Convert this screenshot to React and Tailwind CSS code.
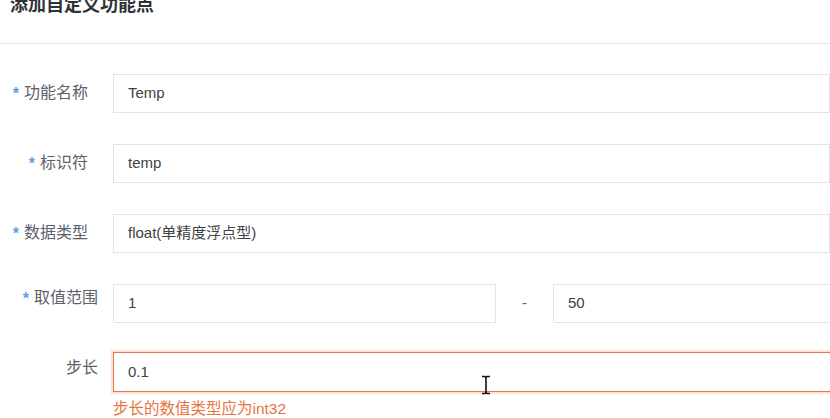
import React from "react";

const font = { fontFamily: '"Liberation Sans", "Noto Sans CJK SC", sans-serif' };

const Label = ({ required, children, className = "pr-[25px]" }) => (
  <div className={`w-[113px] shrink-0 flex justify-end items-center h-[38px] text-[16px] text-[#5b616a] ${className}`}>
    {required && (
      <span className="text-[#5aa0e6] text-[16px] font-bold leading-none mr-[5px] relative top-[1px]">*</span>
    )}
    <span className="leading-none">{children}</span>
  </div>
);

const Input = ({ value, className = "" }) => (
  <div
    className={`h-[39px] border border-[#dfe4e8] bg-white flex items-center pl-[14px] text-[15px] text-[#3f4245] ${className}`}
  >
    {value}
  </div>
);

export default function App() {
  return (
    <div className="w-[830px] h-[418px] overflow-hidden bg-white relative" style={font}>
      <div className="h-[44px] flex items-start border-b border-[#dfe6e8] px-[10px]">
        <h1 className="text-[18px] font-bold text-[#2f3236] leading-none -mt-[4px]">添加自定义功能点</h1>
      </div>

      <div className="pt-[30px] flex flex-col gap-[31px]">
        <div className="flex">
          <Label required>功能名称</Label>
          <Input value="Temp" className="w-[760px]" />
        </div>
        <div className="flex">
          <Label required>标识符</Label>
          <Input value="temp" className="w-[760px]" />
        </div>
        <div className="flex">
          <Label required>数据类型</Label>
          <Input value="float(单精度浮点型)" className="w-[760px]" />
        </div>
        <div className="flex">
          <div className="-mt-[5px]">
            <Label required className="pr-[15px]">取值范围</Label>
          </div>
          <div className="flex items-center">
            <Input value="1" className="w-[383px]" />
            <div className="w-[57px] text-center text-[15px] text-[#5b616a]">-</div>
            <Input value="50" className="w-[320px]" />
          </div>
        </div>
        <div className="flex -mt-[2px]">
          <div className="w-[113px] shrink-0 flex justify-end items-start pr-[15px] pt-[8px] text-[16px] leading-none text-[#5b616a]">
            步长
          </div>
          <div className="flex flex-col">
            <div className="w-[760px] h-[40px] border border-[#e8784a] shadow-[0_0_0_2px_#fbe3d8] bg-white flex items-center pl-[14px] text-[15px] text-[#3f4245]">
              0.1
            </div>
            <div className="text-[15.5px] text-[#e6733f] mt-[9px] leading-none">步长的数值类型应为int32</div>
          </div>
        </div>
      </div>

      <svg className="absolute left-[480px] top-[375px]" width="12" height="20" viewBox="0 0 12 20">
        <path d="M2 1.5h3l1 1 1-1h3M6 2.5v15M2 18.5h3l1-1 1 1h3" fill="none" stroke="#111" strokeWidth="1.6" />
      </svg>
    </div>
  );
}
